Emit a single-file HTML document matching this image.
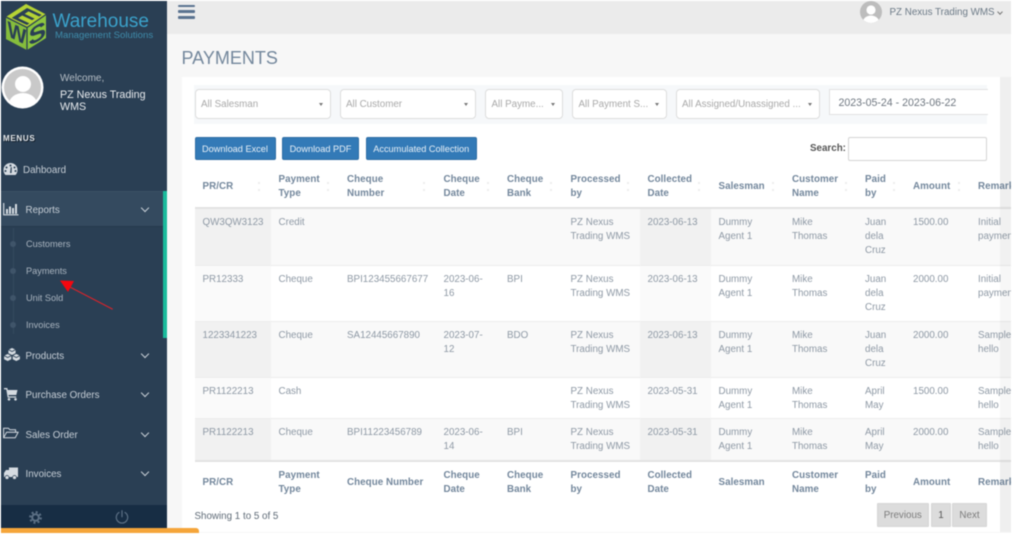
<!DOCTYPE html>
<html><head><meta charset="utf-8"><title>Payments</title>
<style>
*{box-sizing:border-box}
html,body{margin:0;padding:0;background:#fff;width:1024px;height:539px;overflow:hidden}
body{font-family:"Liberation Sans",sans-serif;font-size:9.8px;color:#73879c}
#w{position:absolute;left:0;top:0;width:1024px;height:539px;overflow:hidden;filter:blur(.5px)}
#p{position:absolute;left:0;top:0;width:1011px;height:533px;overflow:hidden;background:#f7f7f7}
.a{position:absolute;white-space:nowrap}
.m{color:#c6ced6;line-height:14px}
.s{color:#a9b4bf;line-height:14px;left:26px;font-size:9.2px}
.d{position:absolute;left:10px;width:6px;height:6px;border-radius:50%;background:#3f5469}
.c{position:absolute;left:141.500px;width:6px;height:6px;border-right:1.700px solid #c6ced6;border-bottom:1.700px solid #c6ced6;transform:rotate(45deg)}
.sel{position:absolute;top:89px;height:30px;background:#fff;border:1px solid #ddd;border-radius:4px;color:#a9a9a9;padding-left:5.500px;line-height:30px;white-space:nowrap}
.sel:after{content:"";position:absolute;right:7px;top:13px;border:2.500px solid transparent;border-top:3.500px solid #777;border-bottom:0}
.btn{position:absolute;top:137px;height:23px;background:#337ab7;border:1px solid #2e6da4;border-radius:2px;color:#e8f0f7;text-align:center;line-height:22px;font-size:9.2px}
table{position:absolute;left:195px;top:167px;width:845px;border-collapse:separate;border-spacing:0;table-layout:fixed;line-height:14px}
th{font-weight:bold;text-align:left;vertical-align:middle;padding:0 7.500px;height:41px;position:relative;letter-spacing:.05px}
thead th{border-bottom:2px solid #e3e3e3;height:42px;padding-top:1px;padding-bottom:1px}
thead th:after{content:"";position:absolute;right:11px;top:15px;width:2px;height:2px;background:#eee;box-shadow:0 7px 0 #eee}
tfoot th{border-top:2px solid #e3e3e3;padding:0 7.500px;height:43px}
td{vertical-align:top;padding:7px 7.500px 0;color:#8e99a5;border-top:1px solid #ededed}
tbody tr:first-child td{border-top:0;padding-top:7px}
tr.o td{background:#f9f9f9}
tr.e td{background:#fff}
tr.o td.k{background:#f1f1f1}
tr.e td.k{background:#fafafa}
tr.t td{padding-top:7px}
.pg{position:absolute;top:503px;height:24px;background:#dcdcdc;border:1px solid #d6d6d6;border-radius:1px;color:#7c7c7c;text-align:center;line-height:23.500px}
</style></head><body>
<div id="w"><div id="p">

<!-- header -->
<div class="a" style="left:167px;top:1px;width:844px;height:33px;background:#ebebeb"></div>
<div class="a" style="left:177.500px;top:4.500px;width:17px;height:2.500px;background:#5a7390;border-radius:1px"></div>
<div class="a" style="left:177.500px;top:10px;width:17px;height:2.500px;background:#5a7390;border-radius:1px"></div>
<div class="a" style="left:177.500px;top:16px;width:17px;height:2.500px;background:#5a7390;border-radius:1px"></div>
<svg class="a" style="left:859px;top:1px" width="24" height="24" viewBox="0 0 24 24"><defs><clipPath id="h"><circle cx="12" cy="11" r="11"/></clipPath></defs><circle cx="12" cy="11" r="11" fill="#bdbdbd"/><g clip-path="url(#h)" fill="#fff"><circle cx="12" cy="9" r="4.600"/><ellipse cx="12" cy="21" rx="8" ry="6.500"/></g></svg>
<div class="a" style="left:889.500px;top:6px;line-height:14px;color:#6c7a87">PZ Nexus Trading WMS</div>
<div class="a" style="left:998px;top:10px;width:4px;height:4px;border-right:1px solid #777;border-bottom:1px solid #777;transform:rotate(45deg)"></div>

<div class="a" style="left:181.500px;top:47px;font-size:18px;line-height:22px;color:#73879c">PAYMENTS</div>

<!-- panel -->
<div class="a" style="left:182px;top:77px;width:818px;height:455px;background:#fff"></div>
<div class="a" style="left:194px;top:85px;width:793px;height:39px;background:#f6f8fa"></div>
<div class="sel" style="left:194.500px;width:136px">All Salesman</div>
<div class="sel" style="left:339.500px;width:136px">All Customer</div>
<div class="sel" style="left:485px;width:78px">All Payme...</div>
<div class="sel" style="left:572px;width:95px">All Payment S...</div>
<div class="sel" style="left:675.500px;width:144px">All Assigned/Unassigned ...</div>
<div class="a" style="left:828.500px;top:89px;width:159px;height:26px;background:#fff;border:1px solid #e2e2e2;border-right:0;font-size:10.600px;line-height:27px;padding-left:9px;color:#6f7780">2023-05-24 - 2023-06-22</div>
<div class="btn" style="left:194.500px;width:81px">Download Excel</div>
<div class="btn" style="left:282px;width:77px">Download PDF</div>
<div class="btn" style="left:365.500px;width:111.500px">Accumulated Collection</div>
<div class="a" style="left:810px;top:142px;line-height:14px;font-weight:bold;color:#555">Search:</div>
<div class="a" style="left:848px;top:137px;width:139px;height:24px;background:#fff;border:1px solid #d5d5d5;border-radius:2px"></div>

<table>
<colgroup><col style="width:76px"><col style="width:68.500px"><col style="width:96.500px"><col style="width:63.500px"><col style="width:63.500px"><col style="width:77px"><col style="width:71px"><col style="width:73.500px"><col style="width:73px"><col style="width:48px"><col style="width:65px"><col style="width:69.500px"></colgroup>
<thead><tr><th>PR/CR</th><th>Payment Type</th><th>Cheque<br>Number</th><th>Cheque Date</th><th>Cheque Bank</th><th>Processed by</th><th>Collected Date</th><th>Salesman</th><th>Customer Name</th><th>Paid by</th><th>Amount</th><th>Remarks</th></tr></thead>
<tbody>
<tr class="o" style="height:56px"><td class="k">QW3QW3123</td><td>Credit</td><td></td><td></td><td></td><td>PZ Nexus Trading WMS</td><td class="k">2023-06-13</td><td>Dummy Agent 1</td><td>Mike Thomas</td><td>Juan dela Cruz</td><td>1500.00</td><td>Initial payment</td></tr>
<tr class="e" style="height:56px"><td class="k">PR12333</td><td>Cheque</td><td>BPI123455667677</td><td>2023-06-16</td><td>BPI</td><td>PZ Nexus Trading WMS</td><td class="k">2023-06-13</td><td>Dummy Agent 1</td><td>Mike Thomas</td><td>Juan dela Cruz</td><td>2000.00</td><td>Initial payment</td></tr>
<tr class="o" style="height:56px"><td class="k">1223341223</td><td>Cheque</td><td>SA12445667890</td><td>2023-07-12</td><td>BDO</td><td>PZ Nexus Trading WMS</td><td class="k">2023-06-13</td><td>Dummy Agent 1</td><td>Mike Thomas</td><td>Juan dela Cruz</td><td>2000.00</td><td>Sample hello</td></tr>
<tr class="e" style="height:41px"><td class="k">PR1122213</td><td>Cash</td><td></td><td></td><td></td><td>PZ Nexus Trading WMS</td><td class="k">2023-05-31</td><td>Dummy Agent 1</td><td>Mike Thomas</td><td>April May</td><td>1500.00</td><td>Sample hello</td></tr>
<tr class="o t" style="height:42px"><td class="k">PR1122213</td><td>Cheque</td><td>BPI11223456789</td><td>2023-06-14</td><td>BPI</td><td>PZ Nexus Trading WMS</td><td class="k">2023-05-31</td><td>Dummy Agent 1</td><td>Mike Thomas</td><td>April May</td><td>2000.00</td><td>Sample hello</td></tr>
</tbody>
<tfoot><tr><th>PR/CR</th><th>Payment Type</th><th>Cheque Number</th><th>Cheque Date</th><th>Cheque Bank</th><th>Processed by</th><th>Collected Date</th><th>Salesman</th><th>Customer Name</th><th>Paid by</th><th>Amount</th><th>Remarks</th></tr></tfoot>
</table>
<div class="a" style="left:1000px;top:77px;width:11px;height:455px;background:rgba(0,0,0,.03)"></div>

<div class="a" style="left:194.500px;top:510px;line-height:14px;color:#5f6b77">Showing 1 to 5 of 5</div>
<div class="pg" style="left:876.500px;width:52.500px">Previous</div>
<div class="pg" style="left:931px;width:20px;color:#555">1</div>
<div class="pg" style="left:952px;width:35px">Next</div>

<!-- sidebar -->
<div class="a" style="left:1px;top:1px;width:165.500px;height:527px;background:#2a3f54"></div>
<div class="a" style="left:1px;top:191px;width:162px;height:36px;background:#344a5f;border-top:1px solid #3a5066;border-bottom:1px solid #25394d"></div>
<div class="a" style="left:163px;top:191px;width:3.500px;height:147px;background:#1abb9c"></div>
<div class="a" style="left:1px;top:505px;width:165.500px;height:23px;background:#172d44"></div>

<svg class="a" style="left:4px;top:3px" width="44" height="49" viewBox="4 3 44 49">
<polygon points="26,4 46,14.500 46,38 27,50 6,39 6,17" fill="#8cc63f"/>
<polygon points="26,4 46,14.500 27,27 6,17" fill="#b5d334"/>
<polygon points="6,17 27,27 27,50 6,39" fill="#85bd3c"/>
<path d="M6,17L27,27.500L46,14.500M27,27.500V50" stroke="#2a3f54" stroke-width="1.300" fill="none"/>
<text transform="matrix(.95,.47,0,1.050,7.500,36)" font-family="Liberation Sans" font-weight="bold" font-size="21" fill="#2a3f54">W</text>
<text transform="matrix(1.100,-.62,0,1,28.500,46.500)" font-family="Liberation Sans" font-weight="bold" font-size="24" fill="#2a3f54">S</text>
<text transform="matrix(1.350,.64,-1.110,.72,10,17)" font-family="Liberation Sans" font-weight="bold" font-size="20" fill="#2a3f54">E</text>
</svg>
<div class="a" style="left:52.500px;top:10.500px;font-size:19px;line-height:22px;color:#3ba2cb">Warehouse</div>
<div class="a" style="left:55px;top:29.500px;font-size:9.600px;line-height:12px;color:#3f8cab">Management Solutions</div>

<svg class="a" style="left:1px;top:66px" width="44" height="44" viewBox="0 0 44 44"><defs><clipPath id="v"><circle cx="22" cy="22" r="18.500"/></clipPath></defs><circle cx="21.500" cy="21.500" r="21" fill="#fff"/><circle cx="21.500" cy="21.500" r="18.500" fill="#c9c9c9"/><g clip-path="url(#v)" fill="#fff"><circle cx="22" cy="18" r="8"/><ellipse cx="22" cy="38" rx="14" ry="11"/></g></svg>
<div class="a" style="left:60px;top:72px;line-height:13px;font-size:10px;color:#b5bdc5">Welcome,</div>
<div class="a" style="left:60px;top:89px;width:95px;white-space:normal;font-size:10.700px;line-height:12px;color:#e8ebee">PZ Nexus Trading WMS</div>

<div class="a" style="left:3px;top:133px;font-size:8px;line-height:12px;font-weight:bold;letter-spacing:.7px;color:#e6e9ec;text-shadow:1px 1px 0 #15202b">MENUS</div>

<svg class="a" style="left:3px;top:162px" width="15" height="14" viewBox="0 0 15 14"><path d="M7.500 1A7 7 0 0 0 .5 8c0 2 .7 3.800 2 5h10c1.300-1.200 2-3 2-5a7 7 0 0 0-7-7z" fill="#d5dbe1"/><g fill="#2a3f54"><circle cx="7.500" cy="3.500" r="1"/><circle cx="3.500" cy="5.500" r="1"/><circle cx="11.500" cy="5.500" r="1"/><circle cx="2.500" cy="9" r="1"/><circle cx="12.500" cy="9" r="1"/><path d="M7 11l.8-6 1 .2L8.600 11z"/></g></svg>
<div class="a m" style="left:23px;top:164px">Dahboard</div>

<svg class="a" style="left:3px;top:202px" width="16" height="14" viewBox="0 0 16 14"><path d="M.7 1v11.800H15.500" stroke="#d5dbe1" stroke-width="1.200" fill="none"/><g fill="#d5dbe1"><rect x="3" y="7" width="2" height="4.800"/><rect x="6" y="4.500" width="2" height="7.300"/><rect x="9" y="6" width="2" height="5.800"/><rect x="12" y="2" width="2" height="9.800"/></g></svg>
<div class="a m" style="left:25.500px;top:203.500px">Reports</div>
<div class="c" style="top:205px"></div>

<div class="a" style="left:12.500px;top:228px;width:1px;height:106px;background:#354a5f"></div>
<div class="d" style="top:241px"></div><div class="d" style="top:268px"></div><div class="d" style="top:295px"></div><div class="d" style="top:322px"></div>
<div class="a s" style="top:236.500px">Customers</div>
<div class="a s" style="top:263.500px">Payments</div>
<div class="a s" style="top:290.500px">Unit Sold</div>
<div class="a s" style="top:317.500px">Invoices</div>

<svg class="a" style="left:3px;top:347px" width="18" height="15" viewBox="0 0 18 15"><g fill="#d5dbe1" stroke="#2a3f54" stroke-width=".8"><path d="M9 .5l4 2v4l-4 2-4-2v-4z"/><path d="M4.700 6.500l4 2v4l-4 2-4-2v-4z"/><path d="M13.300 6.500l4 2v4l-4 2-4-2v-4z"/><path d="M5 2.500l4 2 4-2M.7 8.500l4 2 4-2M9.300 8.500l4 2 4-2" fill="none"/></g></svg>
<div class="a m" style="left:25.500px;top:350px">Products</div>
<div class="c" style="top:351px"></div>

<svg class="a" style="left:4px;top:388px" width="14" height="13" viewBox="0 0 14 13"><path d="M0 .7h2.800L4.200 9h8" stroke="#d5dbe1" stroke-width="1.300" fill="none"/><path d="M3.400 2h10.100l-1.200 5H4.300z" fill="#d5dbe1"/><circle cx="5" cy="11.300" r="1.300" fill="#d5dbe1"/><circle cx="11.500" cy="11.300" r="1.300" fill="#d5dbe1"/></svg>
<div class="a m" style="left:25.500px;top:389px">Purchase Orders</div>
<div class="c" style="top:390px"></div>

<svg class="a" style="left:3px;top:427px" width="16" height="12" viewBox="0 0 16 12"><path d="M.6 10.800V1.200h4.800l1.400 1.500h5.800v2.500M.6 10.800h11.600l3-5.600H3.600z" stroke="#d5dbe1" stroke-width="1" fill="none" stroke-linejoin="round"/></svg>
<div class="a m" style="left:25.500px;top:429px">Sales Order</div>
<div class="c" style="top:430px"></div>

<svg class="a" style="left:4px;top:467px" width="14" height="13" viewBox="0 0 14 13"><path d="M5 .5h9v9.500H5zM0 6l2-3h3v7H0z" fill="#d5dbe1"/><circle cx="3" cy="10.500" r="2" fill="#d5dbe1" stroke="#2a3f54" stroke-width=".7"/><circle cx="10.500" cy="10.500" r="2" fill="#d5dbe1" stroke="#2a3f54" stroke-width=".7"/></svg>
<div class="a m" style="left:25.500px;top:468px">Invoices</div>
<div class="c" style="top:469px"></div>

<svg class="a" style="left:29px;top:511px" width="13" height="13" viewBox="0 0 13 13"><circle cx="6.500" cy="6.500" r="3.300" fill="none" stroke="#5c7085" stroke-width="2"/><circle cx="6.500" cy="6.500" r="5.300" fill="none" stroke="#5c7085" stroke-width="2.200" stroke-dasharray="2 2.160"/></svg>
<svg class="a" style="left:115px;top:510px" width="14" height="14" viewBox="0 0 14 14"><path d="M4 2.500a5.700 5.700 0 1 0 6 0M7 .7v6" fill="none" stroke="#5c7085" stroke-width="1.200" stroke-linecap="round"/></svg>

<svg class="a" style="left:55px;top:275px" width="65" height="40" viewBox="55 275 65 40"><path d="M67 285.500L112.700 309.300" stroke="#d8232a" stroke-width="1.100"/><polygon points="60,280.500 74,281 68,292" fill="#f5070f"/></svg>

<div class="a" style="left:0;top:528px;width:199px;height:5px;background:#f5a53a;border-radius:0 3px 0 0"></div>
<div class="a" style="left:0;top:0;width:1px;height:533px;background:#fff"></div>
<div class="a" style="left:0;top:0;width:1011px;height:1px;background:#fff"></div>
</div></div>
</body></html>
